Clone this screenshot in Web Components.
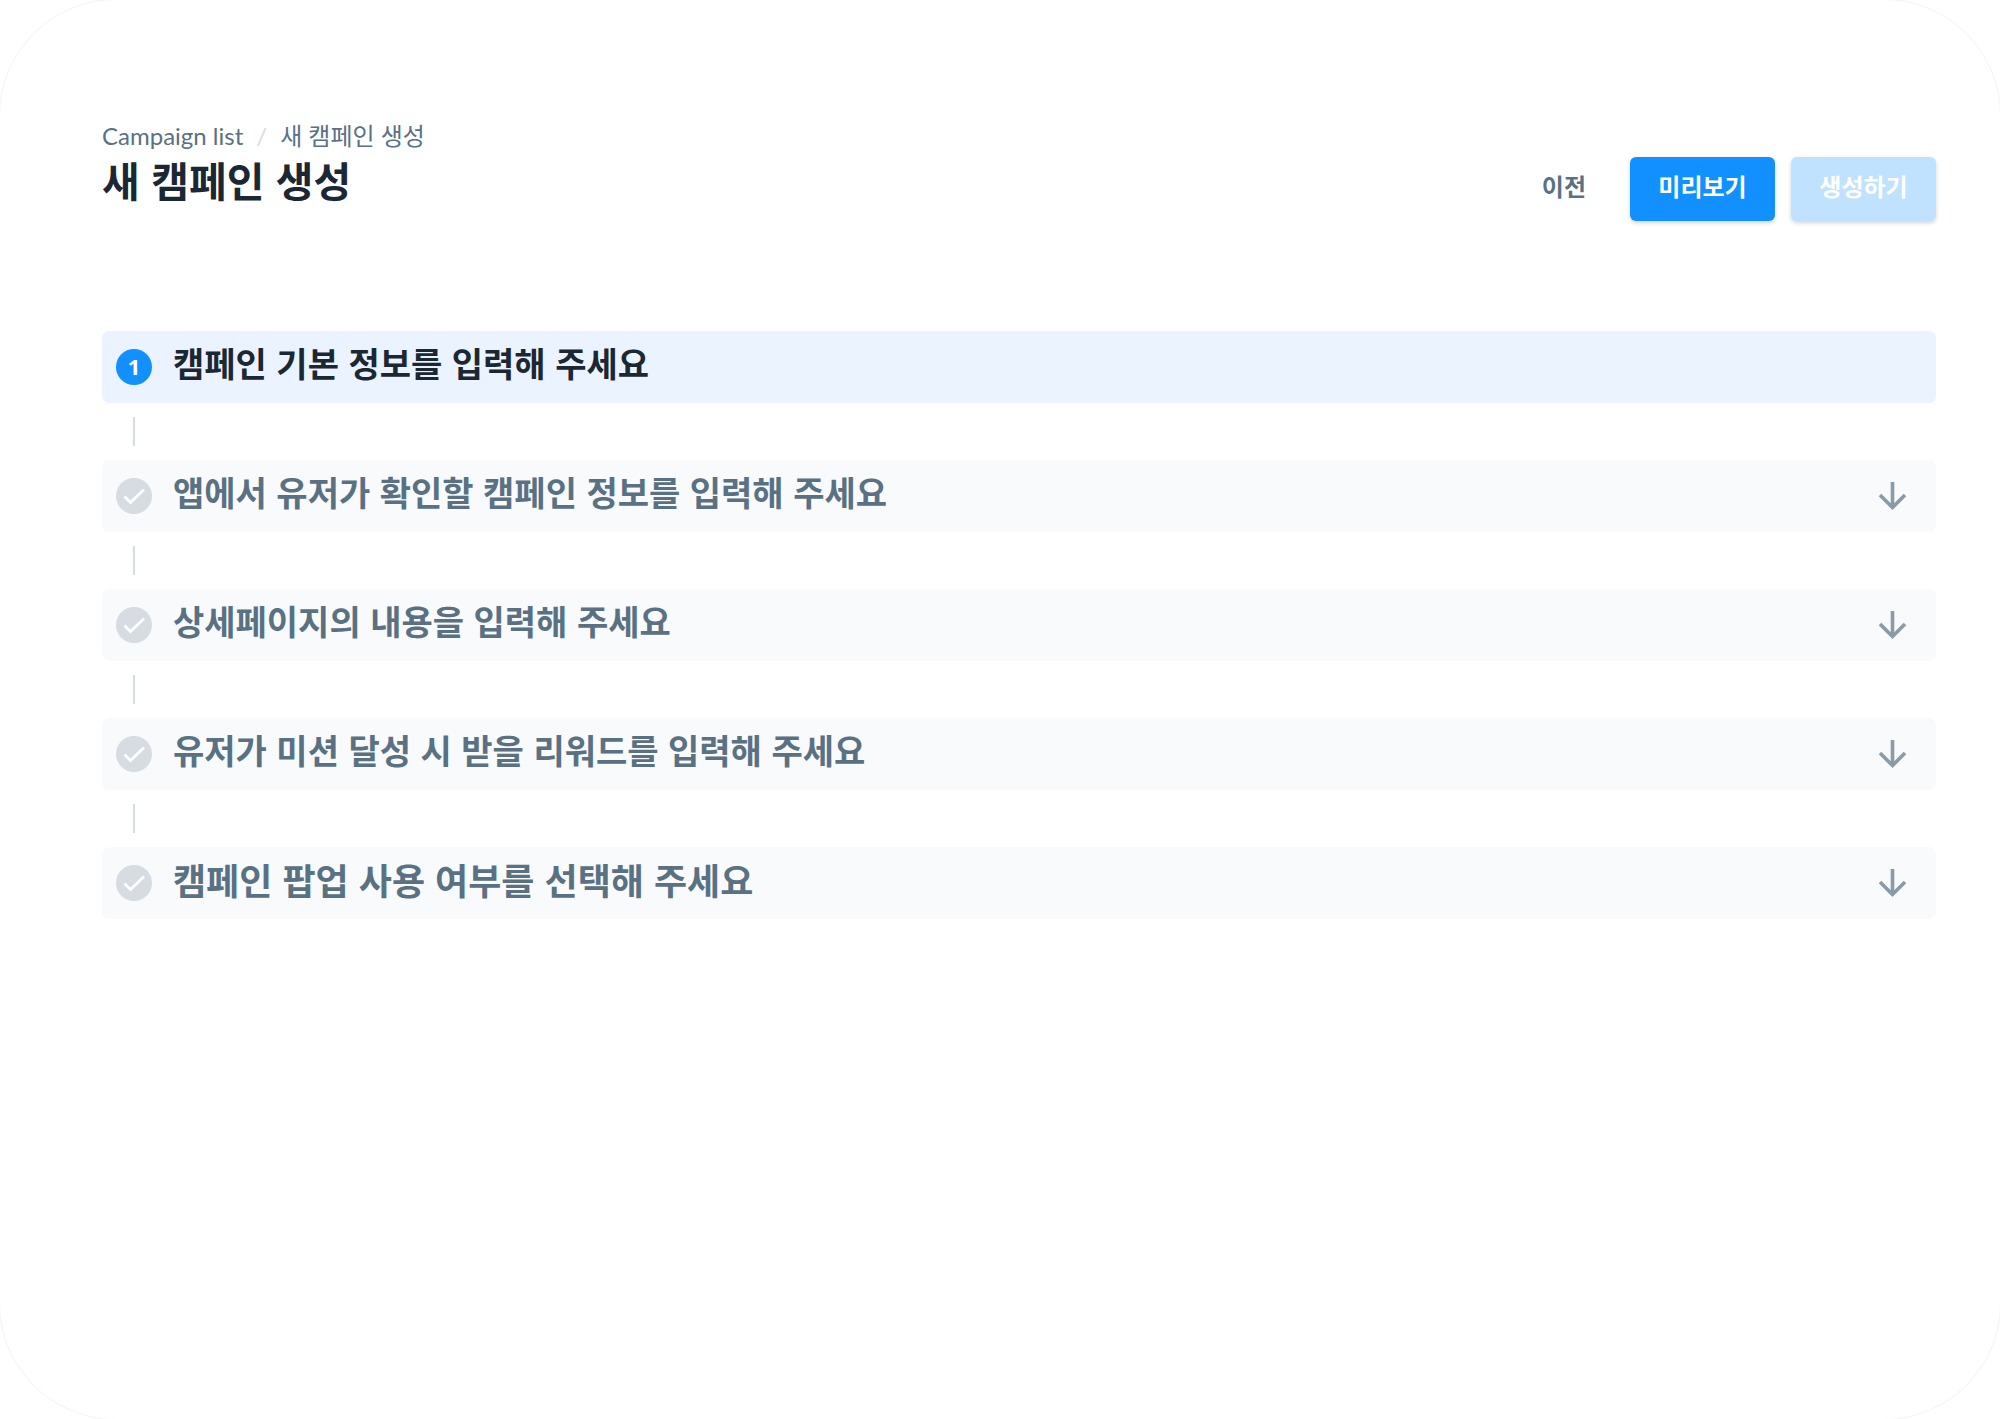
<!DOCTYPE html>
<html lang="ko">
<head>
  <meta charset="UTF-8">
  <meta name="viewport" content="width=device-width, initial-scale=1">
  <title>새 캠페인 생성</title>
  <style>
    body {
      margin: 0;
      background: #fff;
      font-family: 'Noto Sans CJK KR', 'Noto Sans', sans-serif;
      --color-primary: #1290ff;
      --color-ink: #1b2733;
      --color-muted: #5a7184;
      --color-line: #d6dce2;
    }
  </style>
</head>
<body>
  <campaign-page>
    <page-header slot="header" heading="새 캠페인 생성">
      <crumb-link slot="crumbs" href="#campaigns">Campaign list</crumb-link>
      <crumb-link slot="crumbs" href="#new" current>새 캠페인 생성</crumb-link>
      <action-button slot="actions" variant="text">이전</action-button>
      <action-button slot="actions">미리보기</action-button>
      <action-button slot="actions" disabled>생성하기</action-button>
    </page-header>
    <campaign-step number="1" active>캠페인 기본 정보를 입력해 주세요</campaign-step>
    <campaign-step>앱에서 유저가 확인할 캠페인 정보를 입력해 주세요</campaign-step>
    <campaign-step>상세페이지의 내용을 입력해 주세요</campaign-step>
    <campaign-step>유저가 미션 달성 시 받을 리워드를 입력해 주세요</campaign-step>
    <campaign-step class="large">캠페인 팝업 사용 여부를 선택해 주세요</campaign-step>
  </campaign-page>

  <script>
    class CampaignPage extends HTMLElement {
      constructor() {
        super();
        this.attachShadow({ mode: 'open' });
        // the outline falls outside the window, so it only shows round the corners
        this.shadowRoot.innerHTML = `
          <style>
            :host {
              display: block;
              box-sizing: border-box;
              min-height: 100vh;
              padding: 120px 64px 64px 102px;
              border-radius: 116px;
              box-shadow: 0 0 0 1px #f3f3fa;
            }
            main {
              display: flex;
              flex-direction: column;
              margin-top: 110px;
            }
          </style>
          <slot name="header"></slot>
          <main><slot></slot></main>
        `;
      }
    }

    class PageHeader extends HTMLElement {
      constructor() {
        super();
        this.attachShadow({ mode: 'open' });
        this.shadowRoot.innerHTML = `
          <style>
            :host {
              display: flex;
              justify-content: space-between;
              align-items: flex-end;
            }
            nav {
              display: flex;
              line-height: 32px;
            }
            h1 {
              margin: 0;
              padding-bottom: 15px;
              font-size: 41px;
              line-height: 54px;
              color: var(--color-ink);
            }
            .actions {
              display: flex;
              gap: 16px;
            }
          </style>
          <div>
            <nav aria-label="breadcrumb"><slot name="crumbs"></slot></nav>
            <h1></h1>
          </div>
          <div class="actions"><slot name="actions"></slot></div>
        `;
      }

      connectedCallback() {
        this.shadowRoot.querySelector('h1').textContent = this.getAttribute('heading');
      }
    }

    class CrumbLink extends HTMLElement {
      constructor() {
        super();
        this.attachShadow({ mode: 'open' });
        this.shadowRoot.innerHTML = `
          <style>
            :host {
              display: flex;
              font-family: Lato, 'Noto Sans CJK KR', sans-serif;
              font-size: 24px;
            }
            a {
              color: var(--color-muted);
              text-decoration: none;
            }
            .separator {
              margin: 0 13px;
              color: var(--color-line);
            }
            :host([current]) .separator {
              display: none;
            }
          </style>
          <a><slot></slot></a>
          <span class="separator" aria-hidden="true">/</span>
        `;
      }

      connectedCallback() {
        const link = this.shadowRoot.querySelector('a');
        link.href = this.getAttribute('href');
        if (this.hasAttribute('current')) {
          link.setAttribute('aria-current', 'page');
        }
      }
    }

    class ActionButton extends HTMLElement {
      constructor() {
        super();
        this.attachShadow({ mode: 'open' });
        this.shadowRoot.innerHTML = `
          <style>
            :host {
              display: block;
            }
            button {
              min-width: 145px;
              height: 64px;
              padding: 0 28px 6px;
              border: 0;
              border-radius: 6px;
              background: var(--color-primary);
              box-shadow: 0 2px 4px rgba(27, 39, 51, 0.2);
              color: #fff;
              font: bold 24px/32px 'Noto Sans CJK KR', sans-serif;
              cursor: pointer;
            }
            button:disabled {
              background: #c1e2ff;
              cursor: default;
            }
            /* plain text action, no box */
            :host([variant='text']) button {
              min-width: 0;
              background: none;
              box-shadow: none;
              color: var(--color-muted);
            }
          </style>
          <button type="button"><slot></slot></button>
        `;
      }

      connectedCallback() {
        this.shadowRoot.querySelector('button').disabled = this.hasAttribute('disabled');
      }
    }

    class CampaignStep extends HTMLElement {
      constructor() {
        super();
        this.attachShadow({ mode: 'open' });
        this.shadowRoot.innerHTML = `
          <style>
            :host {
              display: block;
              --step-size: 34px;
            }
            :host(.large) {
              --step-size: 36px;
            }
            h2 {
              margin: 0;
            }
            button {
              display: flex;
              align-items: center;
              width: 100%;
              height: 72px;
              padding: 0 28px 0 14px;
              border: 0;
              border-radius: 7px;
              background: #f8fafc;
              color: var(--color-muted);
              font: bold var(--step-size)/48px 'Noto Sans CJK KR', sans-serif;
              text-align: left;
              cursor: pointer;
            }
            :host([active]) button {
              background: #eaf3ff;
              color: var(--color-ink);
            }
            .badge {
              display: flex;
              align-items: center;
              justify-content: center;
              width: 36px;
              height: 36px;
              margin-right: 21px;
              border-radius: 50%;
              background: var(--color-line);
              color: #fff;
              font: bold 22px/34px 'Open Sans', sans-serif;
            }
            :host([active]) .badge {
              align-items: flex-start;
              background: var(--color-primary);
            }
            .label {
              flex: 1;
              padding-bottom: 8px;
            }
            .arrow {
              display: block;
            }
            :host([active]) .arrow {
              display: none;
            }
            .connector {
              width: 2px;
              height: 29px;
              margin: 14px 31px;
              background: var(--color-line);
            }
            :host(:last-of-type) .connector {
              display: none;
            }
          </style>
          <h2>
            <button type="button">
              <span class="badge"></span>
              <span class="label"><slot></slot></span>
              <svg class="arrow" width="32" height="32" viewBox="0 0 32 32" fill="none" stroke="#8a9ba8" stroke-width="3.6" aria-hidden="true">
                <path d="M16.5 2V27.5M4 15L16.5 27.5L29 15"/>
              </svg>
            </button>
          </h2>
          <div class="connector"></div>
        `;
      }

      connectedCallback() {
        const badge = this.shadowRoot.querySelector('.badge');
        const active = this.hasAttribute('active');
        this.shadowRoot.querySelector('button').setAttribute('aria-expanded', active);
        // numbered when open, tick when waiting
        if (this.hasAttribute('number')) {
          badge.textContent = this.getAttribute('number');
        } else {
          badge.innerHTML = `
            <svg width="36" height="36" viewBox="0 0 36 36" fill="none" stroke="#fff" stroke-width="2.8" aria-hidden="true">
              <path d="M8.5 18.5L14.5 24.5L28 11.5"/>
            </svg>`;
        }
      }
    }

    customElements.define('campaign-page', CampaignPage);
    customElements.define('page-header', PageHeader);
    customElements.define('crumb-link', CrumbLink);
    customElements.define('action-button', ActionButton);
    customElements.define('campaign-step', CampaignStep);
  </script>
</body>
</html>
